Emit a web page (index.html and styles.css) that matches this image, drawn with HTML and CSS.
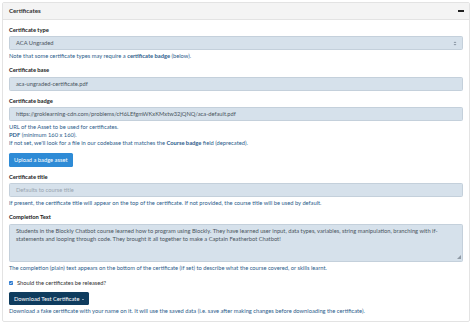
FILE: index.html
```html
<!DOCTYPE html>
<html>
<head>
<meta charset="utf-8">
<link rel="stylesheet" href="styles.css">
</head>
<body>
<div class="panel">
  <div class="panel-heading">
    <span class="panel-title">Certificates</span>
    <span class="collapse-icon"></span>
  </div>
  <div class="panel-body">
    <div class="form-group">
      <label class="label">Certificate type</label>
      <div class="control select">
        <span>ACA Ungraded</span>
        <svg class="arrows" width="4" height="5" viewBox="0 0 4 5"><path d="M0.5 2 L2 0.5 L3.5 2 Z M0.5 3 L2 4.5 L3.5 3 Z" fill="#8a96a3"/></svg>
      </div>
      <p class="help">Note that some certificate types may require a <b>certificate badge</b> (below).</p>
    </div>
    <div class="form-group">
      <label class="label">Certificate base</label>
      <div class="control">aca-ungraded-certificate.pdf</div>
    </div>
    <div class="form-group">
      <label class="label">Certificate badge</label>
      <div class="control">https://groklearning-cdn.com/problems/cH6LEfgmWKxKMxtw32jQNQ/aca-default.pdf</div>
      <p class="help">URL of the Asset to be used for certificates.<br><b>PDF</b> (minimum 160 x 160).<br>If not set, we'll look for a file in our codebase that matches the <b>Course badge</b> field (deprecated).</p>
      <button class="btn btn-primary">Upload a badge asset</button>
    </div>
    <div class="form-group">
      <label class="label">Certificate title</label>
      <div class="control placeholder">Defaults to course title</div>
      <p class="help">If present, the certificate title will appear on the top of the certificate. If not provided, the course title will be used by default.</p>
    </div>
    <div class="form-group">
      <label class="label">Completion Text</label>
      <div class="control textarea">Students in the Blockly Chatbot course learned how to program using Blockly. They have learned user input, data types, variables, string manipulation, branching with if-statements and looping through code. They brought it all together to make a Captain Featherbot Chatbot!
        <svg class="grip" width="4" height="4" viewBox="0 0 4 4"><path d="M4 0 L4 4 L0 4 Z" fill="#8f9aa5"/></svg>
      </div>
      <p class="help">The completion (plain) text appears on the bottom of the certificate (if set) to describe what the course covered, or skills learnt.</p>
    </div>
    <div class="checkbox-row">
      <span class="checkbox"><svg width="4" height="4" viewBox="0 0 4 4"><path d="M0.8 2 L1.7 3 L3.3 1" stroke="#fff" stroke-width="0.7" fill="none"/></svg></span>
      <span>Should the certificates be released?</span>
    </div>
    <button class="btn btn-dark">Download Test Certificate <span class="caret"></span></button>
    <p class="help last">Download a fake certificate with your name on it. It will use the saved data (i.e. save after making changes before downloading the certificate).</p>
  </div>
</div>
</body>
</html>
```
FILE: styles.css
```css
html, body {
  margin: 0;
  padding: 0;
  background: #ffffff;
}
body {
  font-family: Lato, "Open Sans", sans-serif;
  font-size: 5.75px;
  line-height: 8.2px;
  color: #333333;
}
.panel {
  margin: 2px 0 0 2px;
  width: 466px;
  border: 1px solid #e3e3e3;
  border-radius: 2px;
  background: #ffffff;
}
.panel-heading {
  display: flex;
  align-items: center;
  justify-content: space-between;
  height: 16px;
  padding: 0 5px 0 6px;
  background: #f4f4f4;
  border-bottom: 1px solid #e3e3e3;
}
.panel-title {
  font-size: 6.2px;
  font-weight: 700;
  color: #333333;
}
.collapse-icon {
  width: 6px;
  height: 1.6px;
  background: #222222;
}
.panel-body {
  padding: 6px 6px 6px 6px;
}
.form-group {
  margin-bottom: 6px;
}
.label {
  display: block;
  font-weight: 700;
  color: #222222;
  margin-bottom: 2px;
}
.control {
  box-sizing: border-box;
  height: 14px;
  padding: 0 5px 0 6px;
  display: flex;
  align-items: center;
  background: #d6e1eb;
  border: 1px solid #c4d0db;
  border-radius: 1.5px;
  color: #4a5560;
  white-space: nowrap;
  overflow: hidden;
}
.select {
  justify-content: space-between;
}
.placeholder {
  color: #9aa5b0;
}
.textarea {
  position: relative;
  display: block;
  height: 38px;
  padding: 2.5px 5px 2.5px 6px;
  white-space: normal;
  color: #4a5560;
}
.grip {
  position: absolute;
  right: 1.5px;
  bottom: 1.5px;
}
.help {
  margin: 2px 0 0 0;
  color: #2d5d8b;
}
.btn {
  display: inline-block;
  box-sizing: border-box;
  height: 13.5px;
  padding: 0 5px;
  border: none;
  border-radius: 1.5px;
  font-family: Lato, "Open Sans", sans-serif;
  font-size: 5.75px;
  line-height: 13.5px;
  color: #ffffff;
  cursor: pointer;
}
.btn-primary {
  margin-top: 6px;
  background: #2e8bd6;
}
.btn-dark {
  background: #0f3c5e;
  margin-top: 5px;
}
.caret {
  display: inline-block;
  width: 0;
  height: 0;
  margin-left: 1px;
  vertical-align: middle;
  border-top: 1.6px solid #ffffff;
  border-left: 1.6px solid transparent;
  border-right: 1.6px solid transparent;
}
.checkbox-row {
  display: flex;
  align-items: center;
  gap: 4px;
  margin-top: 7px;
  color: #333333;
}
.checkbox {
  width: 4px;
  height: 4px;
  border-radius: 0.8px;
  background: #2e7bd0;
  display: flex;
  align-items: center;
  justify-content: center;
}
.help.last {
  margin-top: 1.5px;
}
```
